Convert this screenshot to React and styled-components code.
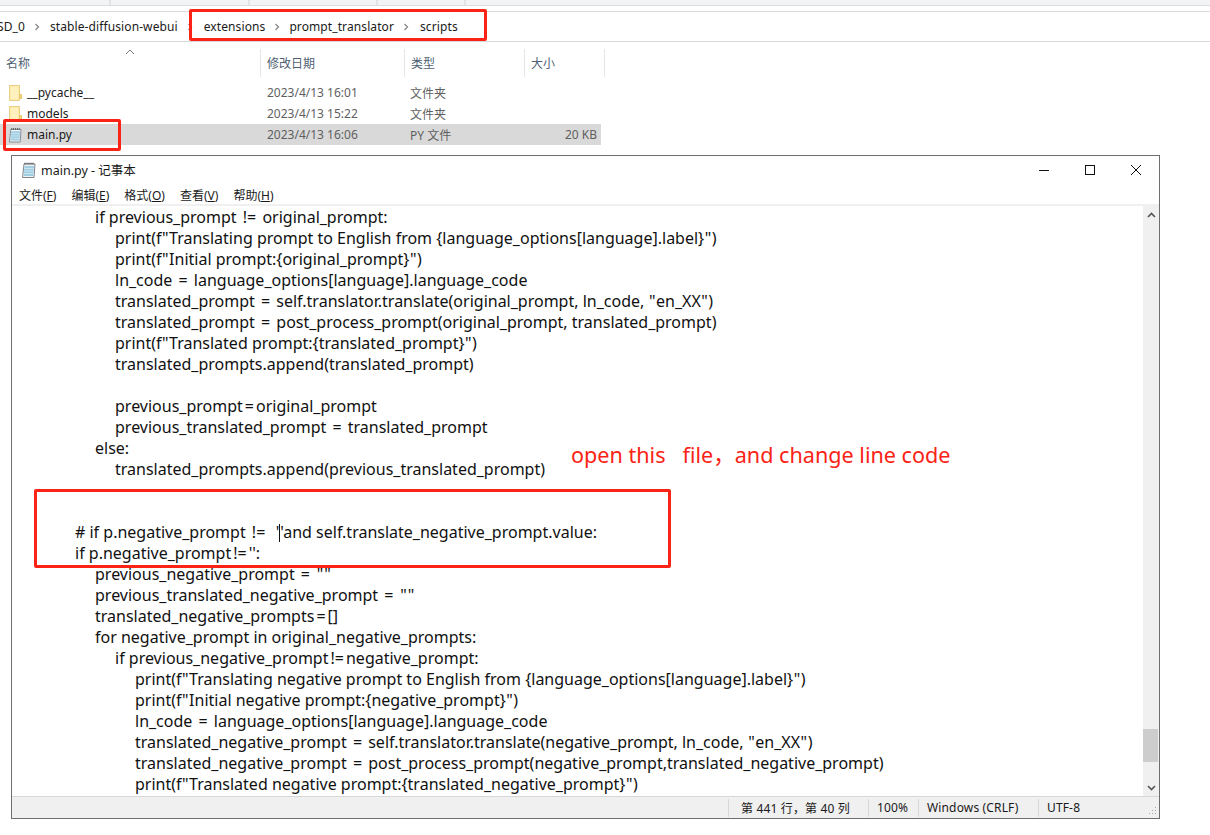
import React from 'react'
import styled, { createGlobalStyle } from 'styled-components'

const GlobalStyle = createGlobalStyle`
  html, body { margin: 0; padding: 0; background: #fff; }
  body { width: 1210px; height: 835px; overflow: hidden; font-family: "Noto Sans", "Noto Sans CJK SC", sans-serif; }
`

const Page = styled.div`
  position: relative;
  width: 1210px;
  height: 835px;
  overflow: hidden;
  background: #fff;
`

const TopStrip = styled.div`
  height: 5px;
  background: #f3f4f6;
  border-bottom: 1px solid #dcdcdc;
  display: flex;
`

const StripCell = styled.div`
  width: ${p => p.$w}px;
  border-right: 2px solid #e3e3e3;
`

const Breadcrumb = styled.div`
  margin-top: 5px;
  height: 29px;
  border-top: 1px solid #dcdcdc;
  border-bottom: 1px solid #d9d9d9;
  display: flex;
  align-items: center;
  font-size: 12px;
  letter-spacing: 0.1px;
  color: #1a1a1a;
  white-space: nowrap;
`

const Crumb = styled.span`
  margin-left: ${p => p.$ml || 0}px;
`

const Chevron = styled.svg`
  width: 6px;
  height: 8px;
  margin-left: 9px;
  flex: none;
`

const HeaderRow = styled.div`
  position: relative;
  height: 39px;
  display: grid;
  grid-template-columns: 261px 144px 120px 80px;
  align-items: center;
  box-sizing: border-box;
  padding-top: 2px;
`

const HeaderCell = styled.div`
  height: 28px;
  display: flex;
  align-items: center;
  padding-left: ${p => p.$pl}px;
  font-size: 12px;
  color: #4f5f73;
  border-right: 1px solid #e5e5e5;
`

const SortCaret = styled.svg`
  position: absolute;
  left: 125px;
  top: 7px;
  width: 10px;
  height: 6px;
`

const FileList = styled.div`
  margin-top: 1px;
  width: 601px;
`

const FileRow = styled.div`
  height: 21px;
  display: grid;
  grid-template-columns: 267px 143px 115px 76px;
  align-items: center;
  font-size: 12px;
  background: ${p => (p.$selected ? '#d9d9d9' : 'transparent')};
`

const NameCell = styled.div`
  display: flex;
  align-items: center;
  padding-left: 8px;
  gap: 5px;
  color: #1a1a1a;
`

const IconSlot = styled.span`
  width: 14px;
  height: 16px;
  display: flex;
  justify-content: flex-end;
`

const MetaCell = styled.div`
  color: #5f5f5f;
  text-align: ${p => (p.$right ? 'right' : 'left')};
  padding-right: ${p => (p.$right ? 4 : 0)}px;
`

const Notepad = styled.div`
  position: absolute;
  left: 11px;
  top: 155px;
  width: 1149px;
  height: 664px;
  box-sizing: border-box;
  border: 1px solid #6e6e6e;
  background: #fff;
  display: flex;
  flex-direction: column;
`

const TitleBar = styled.div`
  height: 28px;
  flex: none;
  box-sizing: border-box;
  display: flex;
  align-items: center;
  padding-left: 9px;
  gap: 5px;
  font-size: 12.5px;
  color: #1a1a1a;
`

const TitleText = styled.span`
  flex: 1;
  padding-bottom: 2px;
`

const WinButtons = styled.div`
  display: flex;
  align-items: center;
`

const WinButton = styled.svg`
  width: 46px;
  height: 12px;
`

const MenuBar = styled.div`
  height: 18px;
  padding-top: 2px;
  flex: none;
  display: flex;
  align-items: center;
  padding-left: 7px;
  gap: 15px;
  font-size: 12px;
  color: #1a1a1a;
  border-bottom: 2px solid #f0f0f0;
`

const EditorArea = styled.div`
  flex: 1;
  min-height: 0;
  display: flex;
`

const CodeView = styled.div`
  flex: 1;
  min-width: 0;
  overflow: hidden;
  padding-top: 1px;
  font-size: 16px;
  color: #111;
`

const CodeLine = styled.div`
  height: 21px;
  line-height: 21px;
  white-space: pre;
  padding-left: ${p => 63 + p.$level * 20}px;
`

// the notepad font has wider = and " than Noto Sans
const WideGlyph = styled.span`
  margin: 0 ${p => p.$gap}px;
`

const TextCaret = styled.span`
  display: inline-block;
  width: 1px;
  height: 18px;
  margin-bottom: -4px;
  background: #111;
`

const Scrollbar = styled.div`
  width: 16px;
  background: #f0f0f0;
  display: flex;
  flex-direction: column;
  align-items: center;
  justify-content: space-between;
  padding: 6px 0 5px;
  box-sizing: border-box;
  position: relative;
`

const ScrollThumb = styled.div`
  position: absolute;
  left: 0;
  top: 523px;
  width: 15px;
  height: 33px;
  background: #cdcdcd;
`

const StatusBar = styled.div`
  height: 21px;
  flex: none;
  display: flex;
  align-items: center;
  justify-content: flex-end;
  padding-right: 1px;
  border-top: 1px solid #d7d7d7;
  background: #f0f0f0;
  font-size: 12px;
  letter-spacing: 0.15px;
  color: #1a1a1a;
  position: relative;
`

const StatusCell = styled.div`
  width: ${p => p.$w}px;
  height: 18px;
  box-sizing: border-box;
  padding-left: ${p => p.$pl || 8}px;
  border-left: 1px solid #d7d7d7;
  display: flex;
  align-items: center;
  white-space: nowrap;
`

const Grip = styled.svg`
  position: absolute;
  right: 2px;
  bottom: 2px;
  width: 10px;
  height: 10px;
`

const RedBox = styled.div`
  position: absolute;
  left: ${p => p.$x}px;
  top: ${p => p.$y}px;
  width: ${p => p.$w}px;
  height: ${p => p.$h}px;
  box-sizing: border-box;
  border: 3px solid #fb2316;
  border-radius: 2px;
  pointer-events: none;
`

const Note = styled.div`
  position: absolute;
  left: 571px;
  top: 440px;
  font-size: 21.6px;
  line-height: 29px;
  color: #fb2316;
  white-space: pre;
`

const FolderIcon = () => (
  <svg width="14" height="16" viewBox="0 0 14 16">
    <path d="M1.5 .5h10v15h-10z" fill="#ffe69b" stroke="#e8cf85" strokeWidth="1" />
    <path d="M11.5 9.5h2v4h-2z" fill="#fbd978" stroke="#e3c36c" strokeWidth="1" />
    <path d="M2.5 1.5h8v13h-8z" fill="#fff0bd" />
  </svg>
)

const PadIcon = () => (
  <svg width="15" height="16" viewBox="0 0 15 16">
    <path d="M3 2h11l-1 13.5H1.5z" fill="#f3f3f3" stroke="#7d8790" strokeWidth="1" />
    <path d="M3.6 4h9.4l-.8 10H2.6z" fill="#9fcde2" />
    <path d="M3.4 6.5h9.4M3.2 9h9.4M3 11.5h9.4" stroke="#d6ecf5" strokeWidth="0.8" />
    <path d="M3.5 1.5h10" stroke="#333" strokeWidth="1.4" strokeDasharray="1 1" />
  </svg>
)

const Arrow = () => (
  <Chevron viewBox="0 0 6 8">
    <path d="M1.5 1l3 3-3 3" fill="none" stroke="#8a8a8a" strokeWidth="1.3" />
  </Chevron>
)

const Code = ({ text }) =>
  text.split(/(!?=|")/).map((part, i) => {
    if (part === '=' || part === '!=') return <WideGlyph key={i} $gap={2}>{part}</WideGlyph>
    if (part === '"') return <WideGlyph key={i} $gap={0.5}>"</WideGlyph>
    return part
  })

const codeLines = [
  [1, 'if previous_prompt != original_prompt:'],
  [2, 'print(f"Translating prompt to English from {language_options[language].label}")'],
  [2, 'print(f"Initial prompt:{original_prompt}")'],
  [2, 'ln_code = language_options[language].language_code'],
  [2, 'translated_prompt = self.translator.translate(original_prompt, ln_code, "en_XX")'],
  [2, 'translated_prompt = post_process_prompt(original_prompt, translated_prompt)'],
  [2, 'print(f"Translated prompt:{translated_prompt}")'],
  [2, 'translated_prompts.append(translated_prompt)'],
  [2, ''],
  [2, 'previous_prompt=original_prompt'],
  [2, 'previous_translated_prompt = translated_prompt'],
  [1, 'else:'],
  [2, 'translated_prompts.append(previous_translated_prompt)'],
  [0, ''],
  [0, ''],
  [0, <><Code text="# if p.negative_prompt !=  '" /><TextCaret />'and self.translate_negative_prompt.value:</>],
  [0, "if p.negative_prompt!='':"],
  [1, 'previous_negative_prompt = ""'],
  [1, 'previous_translated_negative_prompt = ""'],
  [1, 'translated_negative_prompts=[]'],
  [1, 'for negative_prompt in original_negative_prompts:'],
  [2, 'if previous_negative_prompt!=negative_prompt:'],
  [3, 'print(f"Translating negative prompt to English from {language_options[language].label}")'],
  [3, 'print(f"Initial negative prompt:{negative_prompt}")'],
  [3, 'ln_code = language_options[language].language_code'],
  [3, 'translated_negative_prompt = self.translator.translate(negative_prompt, ln_code, "en_XX")'],
  [3, 'translated_negative_prompt = post_process_prompt(negative_prompt,translated_negative_prompt)'],
  [3, 'print(f"Translated negative prompt:{translated_negative_prompt}")'],
]

const files = [
  { name: '__pycache__', date: '2023/4/13 16:01', type: '文件夹', size: '', icon: <FolderIcon /> },
  { name: 'models', date: '2023/4/13 15:22', type: '文件夹', size: '', icon: <FolderIcon /> },
  { name: 'main.py', date: '2023/4/13 16:06', type: 'PY 文件', size: '20 KB', icon: <PadIcon />, selected: true },
]

const App = () => {
  return (
    <Page>
      <GlobalStyle />
      <TopStrip>
        <StripCell $w={109} />
        <StripCell $w={137} />
        <StripCell $w={126} />
        <StripCell $w={86} />
      </TopStrip>
      <Breadcrumb>
        <Crumb $ml={-3}>SD_0</Crumb>
        <Arrow />
        <Crumb $ml={10}>stable-diffusion-webui</Crumb>
        <Arrow />
        <Crumb $ml={11}>extensions</Crumb>
        <Arrow />
        <Crumb $ml={9}>prompt_translator</Crumb>
        <Arrow />
        <Crumb $ml={11}>scripts</Crumb>
      </Breadcrumb>
      <HeaderRow>
        <SortCaret viewBox="0 0 10 6">
          <path d="M1 5l4-4 4 4" fill="none" stroke="#7a7a7a" strokeWidth="1" />
        </SortCaret>
        <HeaderCell $pl={6}>名称</HeaderCell>
        <HeaderCell $pl={6}>修改日期</HeaderCell>
        <HeaderCell $pl={6}>类型</HeaderCell>
        <HeaderCell $pl={6}>大小</HeaderCell>
      </HeaderRow>
      <FileList>
        {files.map(f => (
          <FileRow key={f.name} $selected={f.selected}>
            <NameCell><IconSlot>{f.icon}</IconSlot>{f.name}</NameCell>
            <MetaCell>{f.date}</MetaCell>
            <MetaCell>{f.type}</MetaCell>
            <MetaCell $right>{f.size}</MetaCell>
          </FileRow>
        ))}
      </FileList>

      <Notepad>
        <TitleBar>
          <PadIcon />
          <TitleText>main.py - 记事本</TitleText>
          <WinButtons>
            <WinButton viewBox="0 0 46 12">
              <path d="M18 6.5h10" stroke="#111" strokeWidth="1" />
            </WinButton>
            <WinButton viewBox="0 0 46 12">
              <rect x="18.5" y="1.5" width="9" height="9" fill="none" stroke="#111" strokeWidth="1" />
            </WinButton>
            <WinButton viewBox="0 0 46 12">
              <path d="M18 1l10 10M28 1L18 11" stroke="#111" strokeWidth="1" />
            </WinButton>
          </WinButtons>
        </TitleBar>
        <MenuBar>
          <span>文件(<u>F</u>)</span>
          <span>编辑(<u>E</u>)</span>
          <span>格式(<u>O</u>)</span>
          <span>查看(<u>V</u>)</span>
          <span>帮助(<u>H</u>)</span>
        </MenuBar>
        <EditorArea>
          <CodeView>
            {codeLines.map(([level, text], i) => (
              <CodeLine key={i} $level={level}>
                {typeof text === 'string' ? <Code text={text} /> : text}
              </CodeLine>
            ))}
          </CodeView>
          <Scrollbar>
            <svg width="9" height="6" viewBox="0 0 9 6">
              <path d="M1 5l3.5-3.5L8 5" fill="none" stroke="#555" strokeWidth="1.6" />
            </svg>
            <ScrollThumb />
            <svg width="9" height="6" viewBox="0 0 9 6">
              <path d="M1 1l3.5 3.5L8 1" fill="none" stroke="#555" strokeWidth="1.6" />
            </svg>
          </Scrollbar>
        </EditorArea>
        <StatusBar>
          <StatusCell $w={140} $pl={12}>第 441 行，第 40 列</StatusCell>
          <StatusCell $w={50}>100%</StatusCell>
          <StatusCell $w={120}>Windows (CRLF)</StatusCell>
          <StatusCell $w={120}>UTF-8</StatusCell>
          <Grip viewBox="0 0 10 10">
            <path d="M8 1h1v1H8zM5 4h1v1H5zM8 4h1v1H8zM2 7h1v1H2zM5 7h1v1H5zM8 7h1v1H8z" fill="#a8a8a8" />
          </Grip>
        </StatusBar>
      </Notepad>

      <RedBox $x={189} $y={9} $w={298} $h={32} />
      <RedBox $x={3} $y={119} $w={118} $h={32} />
      <RedBox $x={34} $y={489} $w={637} $h={79} />
      <Note>open this   file，and change line code</Note>
    </Page>
  )
}

export default App
